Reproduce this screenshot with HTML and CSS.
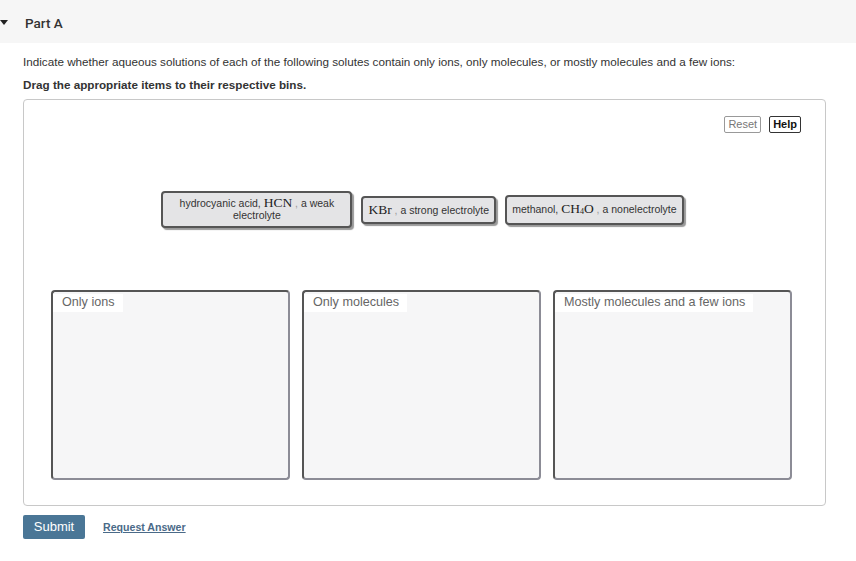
FILE: index.html
```html
<!DOCTYPE html>
<html>
<head>
<meta charset="utf-8">
<link rel="stylesheet" href="styles.css">
</head>
<body>
<div class="part-header">
  <span class="caret"></span>
  <span class="part-title">Part A</span>
</div>
<div class="content">
  <p class="prompt">Indicate whether aqueous solutions of each of the following solutes contain only ions, only molecules, or mostly molecules and a few ions:</p>
  <p class="instr">Drag the appropriate items to their respective bins.</p>
  <div class="dnd">
    <div class="toolbar">
      <button class="tbtn reset">Reset</button>
      <button class="tbtn help">Help</button>
    </div>
    <div class="items">
      <div class="item wide">hydrocyanic acid, <span class="chem">HCN</span><span class="sep"> ,</span> a weak electrolyte</div>
      <div class="item"><span class="chem">KBr</span><span class="sep"> ,</span> a strong electrolyte</div>
      <div class="item">methanol, <span class="chem">CH<sub>4</sub>O</span><span class="sep"> ,</span> a nonelectrolyte</div>
    </div>
    <div class="bins">
      <div class="bin"><span class="bin-label">Only ions</span></div>
      <div class="bin"><span class="bin-label">Only molecules</span></div>
      <div class="bin"><span class="bin-label">Mostly molecules and a few ions</span></div>
    </div>
  </div>
  <div class="actions">
    <button class="submit">Submit</button>
    <a class="request" href="#">Request Answer</a>
  </div>
</div>
</body>
</html>
```
FILE: styles.css
```css
body {
  margin: 0;
  font-family: "Liberation Sans", Arial, sans-serif;
  color: #333;
  background: #fff;
}
.part-header {
  height: 43px;
  background: #f6f6f6;
  display: flex;
  align-items: center;
}
.caret {
  width: 0;
  height: 0;
  border-left: 4px solid transparent;
  border-right: 4px solid transparent;
  border-top: 5px solid #222;
  margin-left: 0;
  margin-top: 1px;
}
.part-title {
  margin-left: 17px;
  font-family: Roboto, "Liberation Sans", sans-serif;
  font-size: 13.5px;
  font-weight: 500;
  color: #333;
  margin-top: 2px;
}
.content {
  padding: 0 30px 0 23px;
}
.prompt {
  margin: 11px 0 0;
  font-size: 11.7px;
  line-height: 15px;
  color: #333;
}
.instr {
  margin: 8px 0 0;
  font-size: 11.7px;
  line-height: 15px;
  font-weight: bold;
  color: #333;
}
.dnd {
  margin-top: 7px;
  height: 405px;
  border: 1px solid #c8c8c8;
  border-radius: 4px;
  display: flex;
  flex-direction: column;
}
.toolbar {
  display: flex;
  justify-content: flex-end;
  gap: 8px;
  padding: 16px 24px 0 0;
}
.tbtn {
  font-family: "Liberation Sans", Arial, sans-serif;
  font-size: 11px;
  line-height: 13px;
  padding: 1px 3px;
  background: #fff;
  border-radius: 2px;
}
.reset {
  border: 1px solid #999;
  color: #777;
}
.help {
  border: 1px solid #333;
  color: #111;
  font-weight: bold;
}
.items {
  display: flex;
  justify-content: center;
  align-items: center;
  gap: 9px;
  margin-top: 58px;
  padding-right: 4px;
}
.item {
  background: #e4e4e6;
  border: 2px solid #555;
  border-radius: 4px;
  box-shadow: 2px 2px 1px #999;
  font-size: 10.5px;
  line-height: 11px;
  color: #333;
  padding: 6px 5px;
  text-align: center;
  white-space: nowrap;
}
.item.wide {
  width: 175px;
  white-space: normal;
  line-height: 12px;
  padding: 4px 6px 5px;
}
.chem {
  font-family: "Liberation Serif", "Times New Roman", serif;
  font-size: 13.5px;
  line-height: 11px;
  color: #222;
}
.sep {
  color: #999;
}
.chem sub {
  font-size: 8px;
  vertical-align: -1px;
}
.bins {
  display: flex;
  gap: 12px;
  margin-top: 62px;
  padding-left: 27px;
}
.bin {
  width: 235px;
  height: 186px;
  background: #f6f6f7;
  border: 2px solid #555;
  border-right-color: #8c8c96;
  border-bottom-color: #8c8c96;
  border-radius: 4px;
}
.bin-label {
  display: inline-block;
  background: #fff;
  color: #666;
  font-size: 12.6px;
  line-height: 16px;
  padding: 0 8px 2px 9px;
}
.actions {
  display: flex;
  align-items: center;
  margin-top: 9px;
}
.submit {
  background: #4a7696;
  color: #fff;
  border: none;
  border-radius: 2px;
  font-family: "Liberation Sans", Arial, sans-serif;
  font-size: 13px;
  width: 62px;
  height: 24px;
  padding: 0 0 2px;
}
.request {
  margin-left: 18px;
  color: #4a6a88;
  font-size: 10.6px;
  font-weight: bold;
  text-decoration: underline;
}
```
